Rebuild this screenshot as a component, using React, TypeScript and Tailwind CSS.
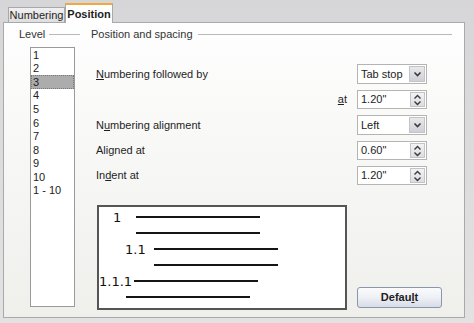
import React from 'react';

const levels = ['1', '2', '3', '4', '5', '6', '7', '8', '9', '10', '1 - 10'];

function ChevronDown(): React.ReactElement {
  return (
    <svg width="9" height="6" viewBox="0 0 9 6" fill="none">
      <path d="M1.5 1.5 L4.5 4.5 L7.5 1.5" stroke="#3a3a3a" strokeWidth="1.6" />
    </svg>
  );
}

function SpinArrows(): React.ReactElement {
  return (
    <svg width="9" height="12" viewBox="0 0 9 12" fill="none">
      <path d="M1.5 4.5 L4.5 1.5 L7.5 4.5" stroke="#3a3a3a" strokeWidth="1.4" />
      <path d="M1.5 7.5 L4.5 10.5 L7.5 7.5" stroke="#3a3a3a" strokeWidth="1.4" />
    </svg>
  );
}

function Dropdown({ value }: { value: string }): React.ReactElement {
  return (
    <div className="flex h-[20px] w-[70px] items-center border border-[#b4b4b4] bg-white">
      <span className="flex-1 pl-[3px] text-[#222]">{value}</span>
      <span className="mr-px flex h-[16px] w-[16px] items-center justify-center border border-[#c4c4c4] bg-gradient-to-b from-[#e9e9ec] to-[#cfd0d6]">
        <ChevronDown />
      </span>
    </div>
  );
}

function Spin({ value }: { value: string }): React.ReactElement {
  return (
    <div className="flex h-[19px] w-[70px] items-center border border-[#b4b4b4] bg-white">
      <span className="flex-1 pl-[3px] text-[#222]">{value}</span>
      <span className="mr-px flex h-[15px] w-[15px] items-center justify-center border border-[#c4c4c4] bg-gradient-to-b from-[#f3f3f5] to-[#dcdde2]">
        <SpinArrows />
      </span>
    </div>
  );
}

function Line({ className }: { className: string }): React.ReactElement {
  return <div className={`h-[2px] bg-[#151515] ${className}`} />;
}

export default function App(): React.ReactElement {
  return (
    <div className="h-[323px] w-[474px] overflow-hidden bg-gradient-to-b from-[#d6d6d8] to-[#e2e2e2] font-['Liberation_Sans',Arial,sans-serif] text-[11px] text-[#1e1e1e]">
      <div className="flex h-[22px] items-end pl-[8px]">
        <div className="flex h-[15px] w-[57px] items-center justify-center border border-b-0 border-[#a9a9a9] bg-gradient-to-b from-[#f0f0f0] to-[#dedede]">
          Numbering
        </div>
        <div className="relative z-10 -mb-px flex h-[20px] w-[48px] items-center justify-center border-x border-t-2 border-[#a9a9a9] border-t-[#f2a93b] bg-white font-bold">
          Position
        </div>
      </div>

      <div className="ml-[3px] flex h-[296px] w-[462px] border border-[#a9a9a9] bg-gradient-to-b from-[#fefefe] to-[#efefec]">
        {/* Level */}
        <div className="w-[83px]">
          <div className="mt-[4px] flex h-[14px] items-center pl-[15px] text-[#333]">
            <span>Level</span>
            <div className="ml-[4px] mr-[7px] h-px flex-1 bg-[#b9b9b9]" />
          </div>
          <div className="ml-[26px] mt-[6px] h-[260px] w-[45px] border border-[#9a9a9a] bg-white text-[#222]">
            {levels.map((l) => (
              <div
                key={l}
                className={
                  l === '3'
                    ? 'flex h-[13.6px] items-center border border-dotted border-[#777] bg-[#acacac] pl-px'
                    : 'flex h-[13.6px] items-center pl-[2px]'
                }
              >
                {l}
              </div>
            ))}
          </div>
        </div>

        {/* Position and spacing */}
        <div className="flex-1">
          <div className="mt-[4px] flex h-[14px] items-center pl-[4px] text-[#333]">
            <span>Position and spacing</span>
            <div className="ml-[5px] mr-[12px] h-px flex-1 bg-[#b9b9b9]" />
          </div>

          <div className="mt-[23px] grid grid-cols-[261px_70px] items-center gap-y-[6px] pl-[9px]">
            <span>
              <u>N</u>umbering followed by
            </span>
            <Dropdown value="Tab stop" />

            <span className="pr-[10px] text-right">
              <u>a</u>t
            </span>
            <Spin value={'1.20"'} />

            <span>
              N<u>u</u>mbering alignment
            </span>
            <Dropdown value="Left" />

            <span>Aligned at</span>
            <Spin value={'0.60"'} />

            <span>
              In<u>d</u>ent at
            </span>
            <Spin value={'1.20"'} />
          </div>

          <div className="ml-[10px] mt-[20px] flex items-end gap-[10px]">
            <div className="h-[105px] w-[250px] border-2 border-[#555] bg-white pt-[2px] font-['DejaVu_Sans',sans-serif] text-[13px] leading-none text-[#111]">
              <div className="flex h-[16px] items-center">
                <span className="w-[37px] pl-[14px]">1</span>
                <Line className="w-[124px]" />
              </div>
              <div className="flex h-[16px] items-center">
                <Line className="ml-[37px] w-[124px]" />
              </div>
              <div className="flex h-[16px] items-center">
                <span className="w-[55px] pl-[26px]">1.1</span>
                <Line className="w-[124px]" />
              </div>
              <div className="flex h-[16px] items-center">
                <Line className="ml-[55px] w-[124px]" />
              </div>
              <div className="flex h-[16px] items-center">
                <span className="w-[35px]">1.1.1</span>
                <Line className="w-[124px]" />
              </div>
              <div className="flex h-[16px] items-center">
                <Line className="ml-[27px] w-[124px]" />
              </div>
            </div>
            <button className="mb-[2px] h-[21px] w-[85px] rounded-[3px] border border-[#8a97aa] bg-gradient-to-b from-[#fbfbfd] via-[#eef0f5] to-[#d8dce6] font-bold text-[#222]">
              Defau<u>l</u>t
            </button>
          </div>
        </div>
      </div>
    </div>
  );
}
